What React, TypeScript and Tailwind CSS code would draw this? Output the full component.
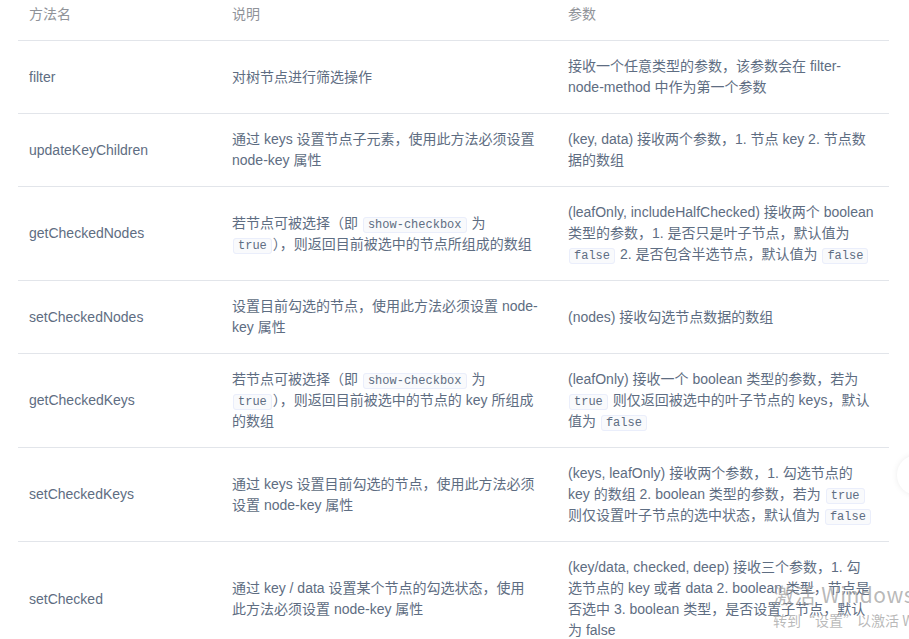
import React from 'react';

const Code: React.FC<{ children: React.ReactNode }> = ({ children }) => (
  <code className="mx-[1px] rounded-[3px] border border-[#eaeefb] bg-[#f9fafc] px-[4px] py-0 font-['Liberation_Mono',monospace] text-[12px] leading-none text-[#5e6d82]">
    {children}
  </code>
);

interface Row {
  name: string;
  desc: React.ReactNode;
  params: React.ReactNode;
}

const rows: Row[] = [
  {
    name: 'filter',
    desc: '对树节点进行筛选操作',
    params: '接收一个任意类型的参数，该参数会在 filter-node-method 中作为第一个参数',
  },
  {
    name: 'updateKeyChildren',
    desc: '通过 keys 设置节点子元素，使用此方法必须设置 node-key 属性',
    params: '(key, data) 接收两个参数，1. 节点 key 2. 节点数据的数组',
  },
  {
    name: 'getCheckedNodes',
    desc: (
      <>
        若节点可被选择（即 <Code>show-checkbox</Code> 为 <Code>true</Code>），则返回目前被选中的节点所组成的数组
      </>
    ),
    params: (
      <>
        (leafOnly, includeHalfChecked) 接收两个 boolean 类型的参数，1. 是否只是叶子节点，默认值为 <Code>false</Code> 2. 是否包含半选节点，默认值为 <Code>false</Code>
      </>
    ),
  },
  {
    name: 'setCheckedNodes',
    desc: '设置目前勾选的节点，使用此方法必须设置 node-key 属性',
    params: '(nodes) 接收勾选节点数据的数组',
  },
  {
    name: 'getCheckedKeys',
    desc: (
      <>
        若节点可被选择（即 <Code>show-checkbox</Code> 为 <Code>true</Code>），则返回目前被选中的节点的 key 所组成的数组
      </>
    ),
    params: (
      <>
        (leafOnly) 接收一个 boolean 类型的参数，若为 <Code>true</Code> 则仅返回被选中的叶子节点的 keys，默认值为 <Code>false</Code>
      </>
    ),
  },
  {
    name: 'setCheckedKeys',
    desc: '通过 keys 设置目前勾选的节点，使用此方法必须设置 node-key 属性',
    params: (
      <>
        (keys, leafOnly) 接收两个参数，1. 勾选节点的 key 的数组 2. boolean 类型的参数，若为 <Code>true</Code> 则仅设置叶子节点的选中状态，默认值为 <Code>false</Code>
      </>
    ),
  },
  {
    name: 'setChecked',
    desc: (
      <>
        通过 key / data 设置某个节点的勾选状态，使用
        <br />
        此方法必须设置 node-key 属性
      </>
    ),
    params: (
      <>
        (key/data, checked, deep) 接收三个参数，1. 勾
        <br />
        选节点的 key 或者 data 2. boolean 类型，节点是否选中 3. boolean 类型，是否设置子节点，默认为 false
      </>
    ),
  },
];

const cols = 'grid grid-cols-[203px_336px_332px]';

export default function App() {
  return (
    <div className="relative h-[639px] w-[909px] overflow-hidden bg-white pl-[18px] font-['Liberation_Sans','Noto_Sans_CJK_SC',sans-serif] text-[14px] leading-[21px] text-[#5e6d82]">
      <div className="w-[871px]">
        {/* header */}
        <div className={`${cols} h-[41px] border-b border-[#e2e5ea] text-[#909399]`}>
          <div className="px-[11px] pt-[4px]">方法名</div>
          <div className="px-[11px] pt-[4px]">说明</div>
          <div className="px-[11px] pt-[4px]">参数</div>
        </div>

        {rows.map((r) => (
          <div key={r.name} className={`${cols} border-b border-[#e2e5ea]`}>
            <div className="flex items-center px-[11px] py-[15px]">{r.name}</div>
            <div className="flex items-center py-[15px] pl-[11px] pr-[18.5px]">
              <div>{r.desc}</div>
            </div>
            <div className="flex items-center py-[15px] pl-[11px] pr-[13px]">
              <div>{r.params}</div>
            </div>
          </div>
        ))}
      </div>

      {/* back-to-top button peeking from the edge */}
      <div className="absolute left-[897px] top-[455px] h-10 w-10 rounded-full bg-white shadow-[0_0_6px_rgba(0,0,0,0.08)]" />

      {/* windows activation watermark */}
      <div className="pointer-events-none absolute left-[773px] top-[580px] font-['Noto_Sans_CJK_SC','Liberation_Sans',sans-serif] text-[#9a9a9a]/70">
        <div className="text-[21px] leading-[28px] tracking-[0.5px]">激活 Windows</div>
        <div className="mt-[2px] whitespace-nowrap text-[14px] leading-[20px]">转到“设置”以激活 Windows。</div>
      </div>
    </div>
  );
}
